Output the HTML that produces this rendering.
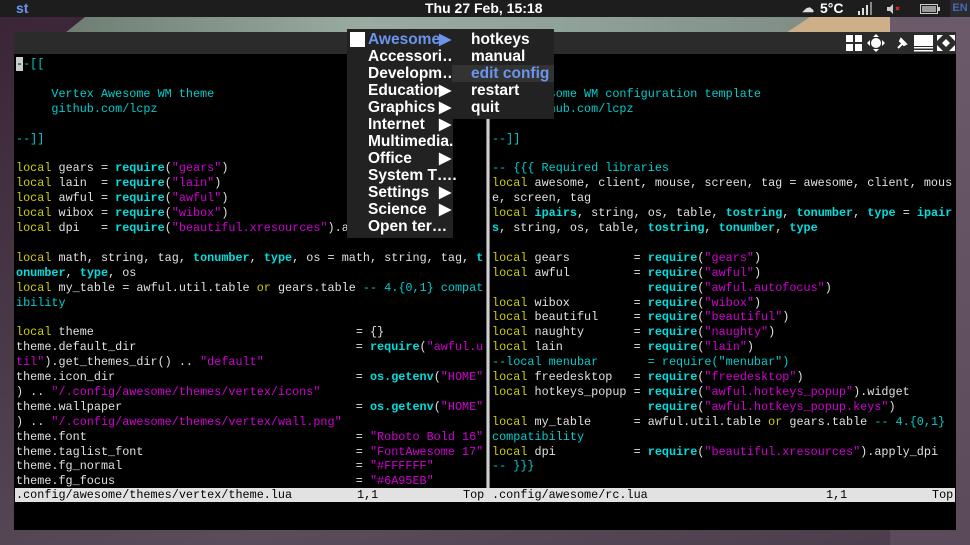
<!DOCTYPE html>
<html><head><meta charset="utf-8"><style>
*{margin:0;padding:0;box-sizing:border-box}
body{width:970px;height:545px;overflow:hidden;position:relative;font-family:"Liberation Sans",sans-serif;
background:linear-gradient(160deg,#3a2436 0%,#4a3a48 40%,#5a4c58 70%,#4a3c4a 100%)}
.wall2{position:absolute;left:60px;top:17px;width:760px;height:20px;background:linear-gradient(90deg,#6e7d72,#9aaba2 40%,#8fa098 70%,#7e8c84);clip-path:polygon(25px 0,100% 0,100% 100%,0 100%)}
.wood{position:absolute;left:780px;top:17px;width:115px;height:20px;background:#cdb08a;clip-path:polygon(30px 0,100% 0,100% 100%,0 100%)}
.wallr{position:absolute;left:890px;top:17px;width:80px;height:528px;background:linear-gradient(180deg,#6b5a6a,#5a4a5a)}
.top{position:absolute;left:0;top:0;width:970px;height:17px;background:#1d1d1d;color:#fff;font-weight:bold;font-size:14px}
.win{position:absolute;left:14px;top:32px;width:942px;height:498px;background:#000}
.tbar{position:absolute;left:0;top:0;width:942px;height:22px;background:#2b2b2b}
pre{position:absolute;font-family:"Liberation Mono",monospace;font-size:11.8px;line-height:14.9px;color:#e0e0e0;white-space:pre}
.k{color:#cdcd00}.c{color:#00cdcd}.s{color:#d000d0}.r{color:#00dede;font-weight:bold}
.status{position:absolute;top:488px;left:15px;width:940px;height:14px;background:#e2e2e2}
.menu{position:absolute;background:#222;color:#fff;font-weight:bold;font-size:15.5px;line-height:17px}
.menu div{height:17px;padding-left:21px;position:relative;white-space:nowrap}
.menu .a{position:absolute;right:2px;top:0}
</style></head><body>
<div class="wall2"></div><div class="wood"></div><div class="wallr"></div>
<div class="top">
<span style="position:absolute;left:16px;top:0;color:#6a95eb">st</span>
<span style="position:absolute;left:425px;top:0">Thu 27 Feb, 15:18</span>
<span style="position:absolute;left:802px;top:1px;font-size:12px;color:#ddd">☁</span>
<span style="position:absolute;left:820px;top:0">5°C</span>
<svg style="position:absolute;left:858px;top:2px" width="16" height="13"><rect x="0" y="9" width="2" height="4" fill="#ddd"/><rect x="4" y="6" width="2" height="7" fill="#ddd"/><rect x="8" y="3" width="2" height="10" fill="#ddd"/><rect x="12" y="0" width="2" height="13" fill="#888"/></svg>
<svg style="position:absolute;left:887px;top:4px" width="14" height="10"><rect x="0" y="3" width="3" height="4" fill="#ccc"/><path d="M3 3 L6 0 V10 L3 7Z" fill="#ccc"/><path d="M9 3 L12 6 M12 3 L9 6" stroke="#e22" stroke-width="1.5"/></svg>
<svg style="position:absolute;left:920px;top:4px" width="20" height="10"><rect x="0.5" y="0.5" width="17" height="9" fill="none" stroke="#ccc"/><rect x="2" y="2" width="14" height="6" fill="#999"/><rect x="18" y="3" width="2" height="4" fill="#ccc"/></svg>
<span style="position:absolute;left:950px;top:0;width:20px;height:17px;background:#2a2a30;color:#4a6ab0;font-size:11px;line-height:17px;text-align:center">EN</span>
</div>
<div class="win"><div class="tbar">
<svg style="position:absolute;left:832px;top:2px" width="110" height="18" fill="#fff">
<rect x="0" y="1" width="7" height="7"/><rect x="9" y="1" width="7" height="7"/><rect x="0" y="10" width="7" height="7"/><rect x="9" y="10" width="7" height="7"/>
<circle cx="30" cy="9" r="5"/><path d="M30 0 l-3 3h6z M30 18 l-3-3h6z M21 9 l3-3v6z M39 9 l-3-3v6z"/>
<path d="M52 14 l4-4 M55 5 l5 5 l-2 1 l-4 -4z" stroke="#fff" stroke-width="2"/>
<rect x="68" y="1" width="19" height="11"/><rect x="68" y="13" width="19" height="1.5"/><rect x="68" y="16" width="19" height="1.5"/>
<path d="M91 1 h6 l-6 6z M109 1 h-6 l6 6z M91 17 h6 l-6-6z M109 17 h-6 l6-6z M96 9 l4-4 4 4 -4 4z"/>
</svg></div></div>
<pre style="left:16px;top:57px"><span style="background:#ccc;color:#000">-</span><span class="c">-[[</span>

<span class="c">     Vertex Awesome WM theme</span>
<span class="c">     github.com/lcpz</span>

<span class="c">--]]</span>

<span class="k">local</span> gears = <span class="r">require</span>(<span class="s">"gears"</span>)
<span class="k">local</span> lain  = <span class="r">require</span>(<span class="s">"lain"</span>)
<span class="k">local</span> awful = <span class="r">require</span>(<span class="s">"awful"</span>)
<span class="k">local</span> wibox = <span class="r">require</span>(<span class="s">"wibox"</span>)
<span class="k">local</span> dpi   = <span class="r">require</span>(<span class="s">"beautiful.xresources"</span>).apply_dpi

<span class="k">local</span> math, string, tag, <span class="r">tonumber</span>, <span class="r">type</span>, os = math, string, tag, <span class="r">t</span>
<span class="r">onumber</span>, <span class="r">type</span>, os
<span class="k">local</span> my_table = awful.util.table <span class="k">or</span> gears.table <span class="c">-- 4.{0,1} compat</span>
<span class="c">ibility</span>

<span class="k">local</span> theme                                     = {}
theme.default_dir                               = <span class="r">require</span>(<span class="s">"awful.u</span>
<span class="s">til"</span>).get_themes_dir() .. <span class="s">"default"</span>
theme.icon_dir                                  = <span class="r">os.getenv</span>(<span class="s">"HOME"</span>
) .. <span class="s">"/.config/awesome/themes/vertex/icons"</span>
theme.wallpaper                                 = <span class="r">os.getenv</span>(<span class="s">"HOME"</span>
) .. <span class="s">"/.config/awesome/themes/vertex/wall.png"</span>
theme.font                                      = <span class="s">"Roboto Bold 16"</span>
theme.taglist_font                              = <span class="s">"FontAwesome 17"</span>
theme.fg_normal                                 = <span class="s">"#FFFFFF"</span>
theme.fg_focus                                  = <span class="s">"#6A95EB"</span></pre>
<div style="position:absolute;left:486px;top:54px;width:4px;height:434px;background:#d0d0d0;border-left:1px solid #777;border-right:1px solid #777"></div>
<pre style="left:492px;top:57px"><span class="c">--[[</span>

<span class="c">     Awesome WM configuration template</span>
<span class="c">     github.com/lcpz</span>

<span class="c">--]]</span>

<span class="c">-- {{{ Required libraries</span>
<span class="k">local</span> awesome, client, mouse, screen, tag = awesome, client, mous
e, screen, tag
<span class="k">local</span> <span class="r">ipairs</span>, string, os, table, <span class="r">tostring</span>, <span class="r">tonumber</span>, <span class="r">type</span> = <span class="r">ipair</span>
<span class="r">s</span>, string, os, table, <span class="r">tostring</span>, <span class="r">tonumber</span>, <span class="r">type</span>

<span class="k">local</span> gears         = <span class="r">require</span>(<span class="s">"gears"</span>)
<span class="k">local</span> awful         = <span class="r">require</span>(<span class="s">"awful"</span>)
                      <span class="r">require</span>(<span class="s">"awful.autofocus"</span>)
<span class="k">local</span> wibox         = <span class="r">require</span>(<span class="s">"wibox"</span>)
<span class="k">local</span> beautiful     = <span class="r">require</span>(<span class="s">"beautiful"</span>)
<span class="k">local</span> naughty       = <span class="r">require</span>(<span class="s">"naughty"</span>)
<span class="k">local</span> lain          = <span class="r">require</span>(<span class="s">"lain"</span>)
<span class="c">--local menubar       = require("menubar")</span>
<span class="k">local</span> freedesktop   = <span class="r">require</span>(<span class="s">"freedesktop"</span>)
<span class="k">local</span> hotkeys_popup = <span class="r">require</span>(<span class="s">"awful.hotkeys_popup"</span>).widget
                      <span class="r">require</span>(<span class="s">"awful.hotkeys_popup.keys"</span>)
<span class="k">local</span> my_table      = awful.util.table <span class="k">or</span> gears.table <span class="c">-- 4.{0,1}</span>
<span class="c">compatibility</span>
<span class="k">local</span> dpi           = <span class="r">require</span>(<span class="s">"beautiful.xresources"</span>).apply_dpi
<span class="c">-- }}}</span></pre>
<div class="status"></div>
<pre style="left:16px;top:488px;color:#000;line-height:14px">.config/awesome/themes/vertex/theme.lua</pre>
<pre style="left:357px;top:488px;color:#000;line-height:14px">1,1</pre>
<pre style="left:463px;top:488px;color:#000;line-height:14px">Top</pre>
<pre style="left:492px;top:488px;color:#000;line-height:14px">.config/awesome/rc.lua</pre>
<pre style="left:826px;top:488px;color:#000;line-height:14px">1,1</pre>
<pre style="left:932px;top:488px;color:#000;line-height:14px">Top</pre>
<div class="menu" style="left:347px;top:29px;width:106px;height:209px;padding-top:2px">
<div style="color:#6a95eb"><span style="position:absolute;left:3px;top:1px;width:15px;height:15px;background:#fff"></span>Awesome<span class="a" style="color:#6a95eb">▶</span></div>
<div>Accessori…</div><div>Developm…</div><div>Education<span class="a">▶</span></div><div>Graphics<span class="a">▶</span></div><div>Internet<span class="a">▶</span></div><div>Multimedia.</div><div>Office<span class="a">▶</span></div><div>System T….</div><div>Settings<span class="a">▶</span></div><div>Science<span class="a">▶</span></div><div>Open ter…</div>
</div>
<div class="menu" style="left:452px;top:29px;width:102px;height:90px;padding-top:2px">
<div style="padding-left:19px">hotkeys</div><div style="padding-left:19px">manual</div><div style="padding-left:19px;color:#6a95eb;background:#333">edit config</div><div style="padding-left:19px">restart</div><div style="padding-left:19px">quit</div>
</div>
</body></html>
